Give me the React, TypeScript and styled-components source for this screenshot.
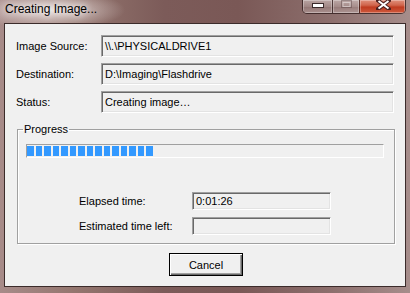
import styled, { createGlobalStyle } from "styled-components";

const GlobalStyle = createGlobalStyle`
  html, body {
    margin: 0;
    padding: 0;
  }
  body {
    width: 410px;
    height: 293px;
    overflow: hidden;
    font-family: "Liberation Sans", Arial, sans-serif;
    font-size: 11px;
    color: #000;
  }
  * {
    box-sizing: border-box;
  }
`;

const Window = styled.div`
  width: 410px;
  height: 293px;
  display: flex;
  flex-direction: column;
  padding: 0 4px 6px;
  background:
    radial-gradient(ellipse 75px 20px at 50px 10px, rgba(235, 225, 224, 0.95), rgba(235, 225, 224, 0) 100%),
    linear-gradient(90deg, #a78b89 0%, #94766f 18%, #7c5b59 40%, #7a5856 58%, #8c6e6c 80%, #a68d8b 100%);
`;

const TitleBar = styled.div`
  height: 23px;
  flex: none;
  display: flex;
  justify-content: space-between;
  align-items: flex-start;
`;

const Title = styled.span`
  padding: 2px 0 0 1px;
  font-family: "Liberation Sans", Arial, sans-serif;
  font-size: 12px;
  line-height: 15px;
  text-shadow: 0 0 6px rgba(255, 255, 255, 0.9), 0 0 10px rgba(255, 255, 255, 0.7);
`;

const CaptionButtons = styled.div`
  display: flex;
  height: 14px;
  border: 1px solid rgba(45, 25, 25, 0.75);
  border-top: none;
  border-radius: 0 0 5px 5px;
  overflow: hidden;
`;

const CaptionButton = styled.div<{ $w: number; $close?: boolean }>`
  width: ${(p) => p.$w}px;
  height: 100%;
  display: flex;
  justify-content: center;
  align-items: flex-start;
  box-shadow: inset 0 0 0 1px rgba(255, 255, 255, 0.3);
  & + & {
    border-left: 1px solid rgba(45, 25, 25, 0.75);
  }
  background: ${(p) =>
    p.$close
      ? "linear-gradient(#e0907c 0%, #d0654c 40%, #bf3b20 55%, #cf5a3e 100%)"
      : "linear-gradient(rgba(225,212,210,0.55) 0%, rgba(190,170,168,0.45) 50%, rgba(160,135,133,0.45) 55%, rgba(200,180,178,0.5) 100%)"};
`;

const Client = styled.div`
  flex: 1;
  display: flex;
  flex-direction: column;
  background: #f0f0f0;
  border: 1px solid #3b2b2a;
  padding: 11px 11px 0;
`;

const FieldGrid = styled.div`
  display: grid;
  grid-template-columns: 85px 293px;
  row-gap: 6px;
  align-items: center;
`;

const Label = styled.span`
  line-height: 13px;
`;

const Field = styled.div<{ $h: number }>`
  height: ${(p) => p.$h}px;
  display: flex;
  align-items: center;
  padding-left: 3px;
  background: #f0f0f0;
  border-style: solid;
  border-width: 1px;
  border-color: #a0a0a0 #ffffff #ffffff #a0a0a0;
  box-shadow: inset 1px 1px 0 #696969, inset -1px -1px 0 #e3e3e3;
  white-space: pre;
`;

const Group = styled.fieldset`
  margin: 9px -1px 0 1px;
  padding: 8px 10px 8px 8px;
  min-width: 0;
  border: 1px solid #a0a0a0;
  box-shadow: inset 1px 1px 0 #fff, 1px 1px 0 #fff;
`;

const Legend = styled.legend`
  margin-left: -3px;
  padding: 0 1px;
  line-height: 14px;
  font-size: 11px;
`;

const ProgressTrack = styled.div`
  height: 14px;
  display: flex;
  gap: 2px;
  padding: 1px 0 1px 0;
  border-style: solid;
  border-width: 1px;
  border-color: #a0a0a0 #ffffff #ffffff #a0a0a0;
`;

const Chunk = styled.div`
  width: 6.5px;
  height: 100%;
  background: #3399ff;
`;

const TimeGrid = styled.div`
  display: grid;
  grid-template-columns: 113px 139px;
  row-gap: 7px;
  align-items: center;
  margin: 34px 0 0 53px;
`;

const ButtonRow = styled.div`
  display: flex;
  justify-content: center;
  margin-top: 9px;
  padding-left: 2px;
`;

const PushButton = styled.button`
  width: 74px;
  height: 23px;
  padding: 0;
  font-family: "Liberation Sans", Arial, sans-serif;
  font-size: 11px;
  color: #000;
  background: #f0f0f0;
  border: 1px solid #000;
  box-shadow: inset 1px 1px 0 #fff, inset -1px -1px 0 #696969, inset -2px -2px 0 #a0a0a0;
`;

const MinGlyph = () => (
  <svg width="14" height="6" viewBox="0 0 14 6" style={{ marginTop: 3 }}>
    <rect x="1.5" y="0.5" width="11" height="4" fill="#fff" stroke="#3a2a2a" />
  </svg>
);

const MaxGlyph = () => (
  <svg width="13" height="9" viewBox="0 0 13 9" style={{ opacity: 0.45 }}>
    <rect x="1.5" y="0.5" width="10" height="7" fill="none" stroke="#5a4444" />
    <rect x="3" y="2.5" width="7" height="4" fill="none" stroke="#fff" />
  </svg>
);

const CloseGlyph = () => (
  <svg width="15" height="10" viewBox="0 0 15 10" style={{ marginLeft: 1 }}>
    <path d="M2 0.5 L13 9 M13 0.5 L2 9" stroke="#4a2020" strokeWidth="4" strokeLinecap="square" />
    <path d="M2.5 1 L12.5 8.5 M12.5 1 L2.5 8.5" stroke="#fff" strokeWidth="2" />
  </svg>
);

const chunks = Array.from({ length: 15 });

const App = () => (
  <>
    <GlobalStyle />
    <Window>
      <TitleBar>
        <Title>Creating Image...</Title>
        <CaptionButtons>
          <CaptionButton $w={29}>
            <MinGlyph />
          </CaptionButton>
          <CaptionButton $w={27}>
            <MaxGlyph />
          </CaptionButton>
          <CaptionButton $w={46} $close>
            <CloseGlyph />
          </CaptionButton>
        </CaptionButtons>
      </TitleBar>
      <Client>
        <FieldGrid>
          <Label>Image Source:</Label>
          <Field $h={22}>{"\\\\.\\PHYSICALDRIVE1"}</Field>
          <Label>Destination:</Label>
          <Field $h={22}>{"D:\\Imaging\\Flashdrive"}</Field>
          <Label>Status:</Label>
          <Field $h={22}>Creating image…</Field>
        </FieldGrid>
        <Group>
          <Legend>Progress</Legend>
          <ProgressTrack>
            {chunks.map((_, i) => (
              <Chunk key={i} />
            ))}
          </ProgressTrack>
          <TimeGrid>
            <Label>Elapsed time:</Label>
            <Field $h={18}>0:01:26</Field>
            <Label>Estimated time left:</Label>
            <Field $h={18} />
          </TimeGrid>
        </Group>
        <ButtonRow>
          <PushButton>Cancel</PushButton>
        </ButtonRow>
      </Client>
    </Window>
  </>
);

export default App;
